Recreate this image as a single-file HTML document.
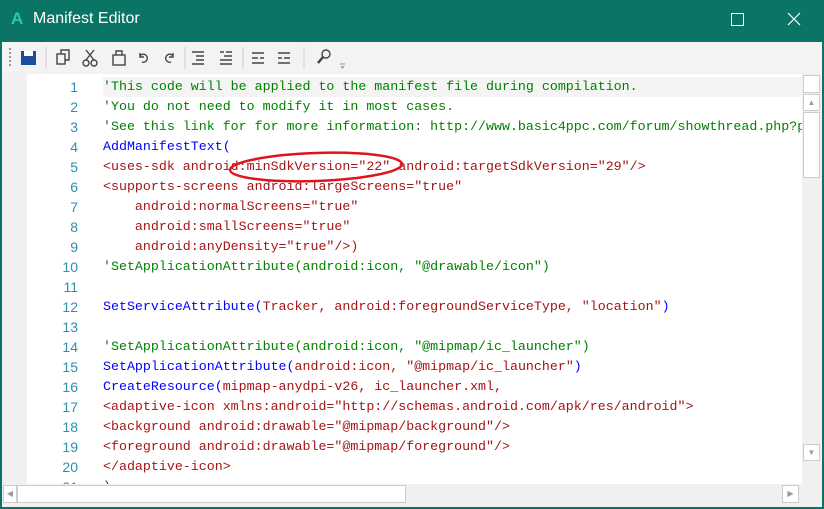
<!DOCTYPE html>
<html><head><style>
*{margin:0;padding:0;box-sizing:border-box}
body{width:824px;height:509px;background:#0b7565;position:relative;overflow:hidden;font-family:"Liberation Sans",sans-serif}
.title{position:absolute;left:0;top:0;width:824px;height:42px;color:#fff;font-size:16px}
.client{position:absolute;left:2px;top:42px;width:820px;height:465px;background:#f0f0f0}
.tb{position:absolute;left:0;top:0;width:820px;height:31px;background:#f3f3f3}
.ed{position:absolute;left:0;top:32px;width:800px;height:410px;background:#fff;overflow:hidden}
.gut{position:absolute;left:0;top:0;width:25px;height:410px;background:#f0f0f0}
.ln{position:absolute;left:25px;width:51px;text-align:right;color:#2b91af;font:14px "Liberation Sans",sans-serif}
.code{position:absolute;left:101px;white-space:pre;font:13.3px "Liberation Mono",monospace;color:#a31515}
.c{color:#008000}.b{color:#0000ff}
.cur{position:absolute;left:101px;top:3px;width:699px;height:20px;background:#f4f4f4}
</style></head><body>
<div class="title">
<span style="position:absolute;left:11px;top:9px;font-weight:bold;color:#2ec4b0;font-size:17px">A</span>
<span style="position:absolute;left:33px;top:10px">Manifest Editor</span>
<svg style="position:absolute;left:0;top:0" width="824" height="42"><rect x="731.5" y="13.5" width="12" height="12" fill="none" stroke="#fff"/><path d="M788 13L800 25M800 13L788 25" stroke="#fff" stroke-width="1.2"/></svg>
</div>
<div class="client">
<div class="tb"><svg width="360" height="31">
<g fill="#999"><rect x="7" y="6" width="2" height="2"/><rect x="7" y="10" width="2" height="2"/><rect x="7" y="14" width="2" height="2"/><rect x="7" y="18" width="2" height="2"/><rect x="7" y="22" width="2" height="2"/></g>
<rect x="19" y="9" width="15" height="14" fill="#1a4fa0"/><rect x="22" y="9" width="9" height="5" fill="#fff"/>
<line x1="44" y1="5" x2="44" y2="27" stroke="#ccc"/>
<g fill="none" stroke="#444" stroke-width="1.4"><rect x="55" y="12" width="8" height="10"/><path d="M59 12V8h8v10h-4"/>
<path d="M84 8l8 10M92 8l-8 10"/><circle cx="84" cy="21" r="3"/><circle cx="92" cy="21" r="3"/>
<rect x="111" y="13" width="12" height="10"/><path d="M114 13V9h6v4"/>
<path d="M138 14a4 4 0 1 1 2 6M138 11v4h4"/><path d="M171 14a4 4 0 1 0-2 6M171 11v4h-4"/>
<path d="M190 10h12M194 14h8M194 18h8M190 22h12"/><path d="M218 10h4M224 10h6M222 14h8M218 18h12M218 22h12"/>
<path d="M250 11h12M250 16h6M258 16h4M250 21h12"/><path d="M276 11h12M276 16h4M282 16h6M276 21h12"/>
<circle cx="324" cy="12" r="4"/><path d="M321 15l-5 6" stroke-width="2.5"/></g>
<line x1="241" y1="5" x2="241" y2="27" stroke="#ccc"/><line x1="183" y1="5" x2="183" y2="27" stroke="#ccc"/><line x1="302" y1="5" x2="302" y2="27" stroke="#ccc"/>
<path d="M338 22h5M339 24l1.5 2 1.5-2" stroke="#888" fill="none"/>
</svg></div>
<div class="ed">
<div class="gut"></div>
<div class="cur"></div>
<div class="ln" style="top:3px;line-height:20px">1<br>2<br>3<br>4<br>5<br>6<br>7<br>8<br>9<br>10<br>11<br>12<br>13<br>14<br>15<br>16<br>17<br>18<br>19<br>20<br>21</div>
<div class="code" style="top:3px;line-height:20px"><span class="c">'This code will be applied to the manifest file during compilation.
'You do not need to modify it in most cases.
'See this link for for more information: http://www.basic4ppc.com/forum/showthread.php?p</span>
<span class="b">AddManifestText(</span>
&lt;uses-sdk android:minSdkVersion="22" android:targetSdkVersion="29"/&gt;
&lt;supports-screens android:largeScreens="true"
    android:normalScreens="true"
    android:smallScreens="true"
    android:anyDensity="true"/&gt;)
<span class="c">'SetApplicationAttribute(android:icon, "@drawable/icon")</span>

<span class="b">SetServiceAttribute(</span>Tracker, android:foregroundServiceType, "location"<span class="b">)</span>

<span class="c">'SetApplicationAttribute(android:icon, "@mipmap/ic_launcher")</span>
<span class="b">SetApplicationAttribute(</span>android:icon, "@mipmap/ic_launcher"<span class="b">)</span>
<span class="b">CreateResource(</span>mipmap-anydpi-v26, ic_launcher.xml,
&lt;adaptive-icon xmlns:android="http://schemas.android.com/apk/res/android"&gt;
&lt;background android:drawable="@mipmap/background"/&gt;
&lt;foreground android:drawable="@mipmap/foreground"/&gt;
&lt;/adaptive-icon&gt;
)</div>
</div>
<svg style="position:absolute;left:0;top:0" width="820" height="465"><ellipse cx="314" cy="125" rx="86" ry="14" transform="rotate(-2 314 125)" fill="none" stroke="#e0141c" stroke-width="2.5"/></svg>
<div style="position:absolute;left:800px;top:32px;width:20px;height:410px;background:#f0f0f0">
<div style="position:absolute;left:1px;top:1px;width:17px;height:18px;border:1px solid #ccc;background:#fff"></div>
<div style="position:absolute;left:1px;top:20px;width:17px;height:17px;border:1px solid #ccc;background:#fff;font-size:8px;color:#999;text-align:center;line-height:15px">▲</div>
<div style="position:absolute;left:1px;top:38px;width:17px;height:66px;border:1px solid #ccc;background:#fff"></div>
<div style="position:absolute;left:1px;top:370px;width:17px;height:17px;border:1px solid #ccc;background:#fff;font-size:8px;color:#999;text-align:center;line-height:15px">▼</div>
</div>
<div style="position:absolute;left:0;top:442px;width:820px;height:21px;background:#f0f0f0">
<div style="position:absolute;left:1px;top:1px;width:14px;height:18px;border:1px solid #ccc;background:#fff;font-size:8px;color:#999;line-height:16px;text-align:center">◀</div>
<div style="position:absolute;left:15px;top:1px;width:389px;height:18px;border:1px solid #ccc;background:#fff"></div>
<div style="position:absolute;left:780px;top:1px;width:17px;height:18px;border:1px solid #ccc;background:#fff;font-size:8px;color:#999;line-height:16px;text-align:center">▶</div>
</div>
</div>
</body></html>
